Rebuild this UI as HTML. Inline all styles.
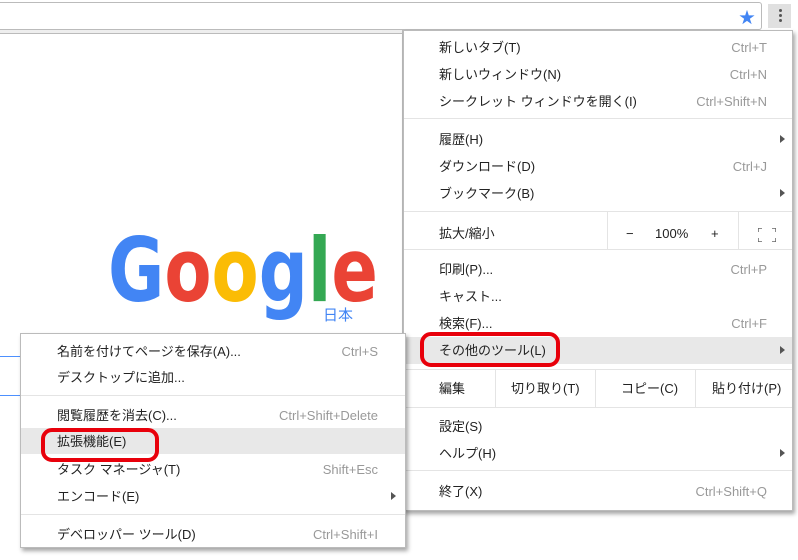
<!DOCTYPE html>
<html><head><meta charset="utf-8"><style>
*{margin:0;padding:0;box-sizing:border-box}
body{width:798px;height:560px;background:#fff;position:relative;overflow:hidden;font-family:"Liberation Sans","Noto Sans CJK JP",sans-serif;font-size:13px;color:#222}
.a{position:absolute}
.menu{position:absolute;background:#fff;border:1px solid #bbb;box-shadow:2px 3px 4px rgba(0,0,0,.35)}
.it{position:absolute;left:0;right:0;height:27px;line-height:27px}
.it .l{position:absolute}
.it .r{position:absolute;color:#999}
.sep{position:absolute;left:0;right:0;height:1px;background:#e4e4e4}
.hl{background:#e8e8e8}
.arr{position:absolute;width:0;height:0;border-left:5px solid #555;border-top:4px solid transparent;border-bottom:4px solid transparent}
.red{position:absolute;border:4px solid #e8000b;border-radius:11px}
</style></head><body>
<div class="a" style="left:0;top:2px;width:762px;height:28px;border:1px solid #bbb;border-left:none;border-radius:0 3px 3px 0"></div>
<div class="a" style="left:739px;top:4px;font-size:16px;color:#4285f4">★</div>
<div class="a" style="left:768px;top:4px;width:23px;height:24px;background:#e0e0e0"></div>
<div class="a" style="left:779px;top:9px;width:3px;height:3px;background:#555;border-radius:50%;box-shadow:0 5px 0 #555,0 10px 0 #555"></div>
<div class="a" style="left:0;top:30px;width:402px;height:4px;background:#eee;border-bottom:1px solid #bbb"></div>
<div class="a" style="left:402px;top:30px;width:1px;height:330px;background:#bbb"></div>
<svg class="a" style="left:100px;top:220px" width="300" height="110">
<text y="81" font-family="DejaVu Sans,sans-serif" font-weight="bold" font-size="88" textLength="270" x="8" lengthAdjust="spacingAndGlyphs"><tspan fill="#4285f4">G</tspan><tspan fill="#ea4335">o</tspan><tspan fill="#fbbc05">o</tspan><tspan fill="#4285f4">g</tspan><tspan fill="#34a853">l</tspan><tspan fill="#ea4335">e</tspan></text>
</svg>
<div class="a" style="left:323px;top:304px;font-size:15px;color:#4285f4">日本</div>
<div class="a" style="left:0;top:356px;width:30px;height:40px;border:1px solid #4d90fe;border-left:none"></div>

<div class="menu" style="left:403px;top:30px;width:390px;height:481px">
<div class="it" style="top:3px"><span class="l" style="left:35px">新しいタブ(T)</span><span class="r" style="right:25px">Ctrl+T</span></div>
<div class="it" style="top:30px"><span class="l" style="left:35px">新しいウィンドウ(N)</span><span class="r" style="right:25px">Ctrl+N</span></div>
<div class="it" style="top:57px"><span class="l" style="left:35px">シークレット ウィンドウを開く(I)</span><span class="r" style="right:25px">Ctrl+Shift+N</span></div>
<div class="sep" style="top:87px"></div>
<div class="it" style="top:95px"><span class="l" style="left:35px">履歴(H)</span><span class="arr" style="right:7px;top:9px"></span></div>
<div class="it" style="top:122px"><span class="l" style="left:35px">ダウンロード(D)</span><span class="r" style="right:25px">Ctrl+J</span></div>
<div class="it" style="top:149px"><span class="l" style="left:35px">ブックマーク(B)</span><span class="arr" style="right:7px;top:9px"></span></div>
<div class="sep" style="top:180px"></div>
<div class="it" style="top:187px;height:32px;line-height:32px"><span class="l" style="left:35px">拡大/縮小</span><span class="l" style="left:222px">−</span><span class="l" style="left:251px">100%</span><span class="l" style="left:307px">+</span>
<div class="a" style="left:203px;top:-7px;width:1px;height:38px;background:#e4e4e4"></div><div class="a" style="left:334px;top:-7px;width:1px;height:38px;background:#e4e4e4"></div>
<svg class="a" style="left:354px;top:10px" width="18" height="14"><path d="M0 4V0h4M14 0h4v4M18 10v4h-4M4 14H0v-4" fill="none" stroke="#666" stroke-width="1.5"/></svg></div>
<div class="sep" style="top:218px"></div>
<div class="it" style="top:225px"><span class="l" style="left:35px">印刷(P)...</span><span class="r" style="right:25px">Ctrl+P</span></div>
<div class="it" style="top:252px"><span class="l" style="left:35px">キャスト...</span></div>
<div class="it" style="top:279px"><span class="l" style="left:35px">検索(F)...</span><span class="r" style="right:25px">Ctrl+F</span></div>
<div class="it hl" style="top:306px"><span class="l" style="left:35px">その他のツール(L)</span><span class="arr" style="right:7px;top:9px"></span></div>
<div class="sep" style="top:338px"></div>
<div class="it" style="top:339px;height:37px;line-height:37px"><span class="l" style="left:35px">編集</span><span class="l" style="left:107px">切り取り(T)</span><span class="l" style="left:217px">コピー(C)</span><span class="l" style="left:308px">貼り付け(P)</span>
<div class="a" style="left:91px;top:0;width:1px;height:37px;background:#e4e4e4"></div><div class="a" style="left:191px;top:0;width:1px;height:37px;background:#e4e4e4"></div><div class="a" style="left:291px;top:0;width:1px;height:37px;background:#e4e4e4"></div></div>
<div class="sep" style="top:376px"></div>
<div class="it" style="top:382px"><span class="l" style="left:35px">設定(S)</span></div>
<div class="it" style="top:409px"><span class="l" style="left:35px">ヘルプ(H)</span><span class="arr" style="right:7px;top:9px"></span></div>
<div class="sep" style="top:439px"></div>
<div class="it" style="top:447px"><span class="l" style="left:35px">終了(X)</span><span class="r" style="right:25px">Ctrl+Shift+Q</span></div>
</div>
<div class="red" style="left:420px;top:332px;width:140px;height:35px"></div>

<div class="menu" style="left:20px;top:333px;width:386px;height:215px">
<div class="it" style="top:4px"><span class="l" style="left:36px">名前を付けてページを保存(A)...</span><span class="r" style="right:27px">Ctrl+S</span></div>
<div class="it" style="top:30px"><span class="l" style="left:36px">デスクトップに追加...</span></div>
<div class="sep" style="top:61px"></div>
<div class="it" style="top:68px"><span class="l" style="left:36px">閲覧履歴を消去(C)...</span><span class="r" style="right:27px">Ctrl+Shift+Delete</span></div>
<div class="it hl" style="top:94px;height:26px;line-height:27px"><span class="l" style="left:36px">拡張機能(E)</span></div>
<div class="it" style="top:122px"><span class="l" style="left:36px">タスク マネージャ(T)</span><span class="r" style="right:27px">Shift+Esc</span></div>
<div class="it" style="top:149px"><span class="l" style="left:36px">エンコード(E)</span><span class="arr" style="right:9px;top:9px"></span></div>
<div class="sep" style="top:180px"></div>
<div class="it" style="top:187px"><span class="l" style="left:36px">デベロッパー ツール(D)</span><span class="r" style="right:27px">Ctrl+Shift+I</span></div>
</div>
<div class="red" style="left:41px;top:428px;width:118px;height:34px"></div>
</body></html>
